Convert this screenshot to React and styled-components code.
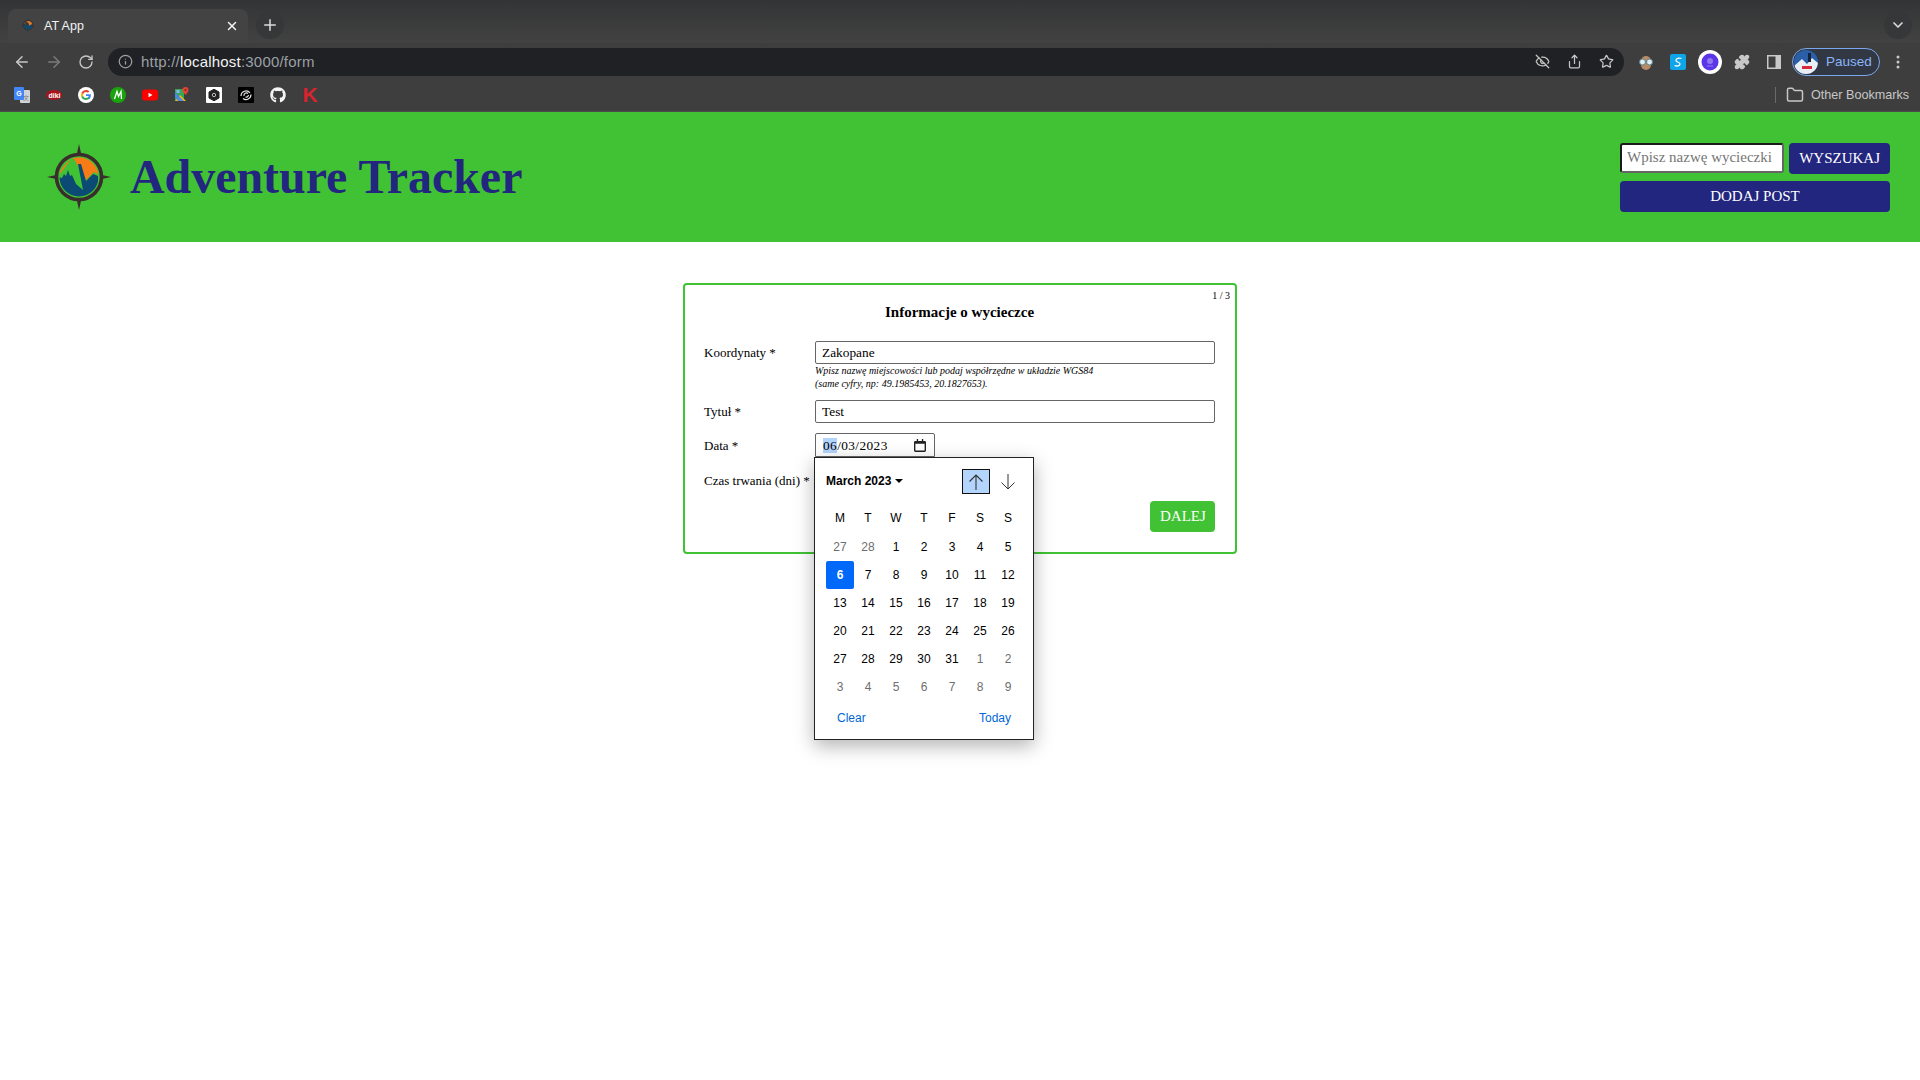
import styled, { createGlobalStyle } from "styled-components";
import { ArrowLeft, ArrowRight, RotateCw, Info, EyeOff, Share, Star, Puzzle, X, Plus, ChevronDown, Folder } from "lucide-react";
import { FaGithub } from "react-icons/fa";

const GREEN = "#40c234";
const NAVY = "#23267f";
const SERIF = '"Liberation Serif", "Times New Roman", serif';
const SANS = '"Liberation Sans", Arial, sans-serif';

const GlobalStyle = createGlobalStyle`
  html, body {
    margin: 0;
    background: #fff;
  }
  * {
    box-sizing: border-box;
  }
`;

const Page = styled.div`
  width: 1920px;
  height: 1080px;
  overflow: hidden;
  display: flex;
  flex-direction: column;
  font-family: ${SERIF};
`;

/* browser chrome */
const TabStrip = styled.div`
  height: 43px;
  flex: none;
  display: flex;
  align-items: flex-end;
  padding: 0 8px;
  background: linear-gradient(#333435, #424242);
`;

const Tab = styled.div`
  position: relative;
  width: 240px;
  height: 34px;
  display: flex;
  align-items: center;
  padding: 0 9px 1px 13px;
  border-radius: 8px 8px 0 0;
  background: #434343;
  color: #f1f3f4;
  font: 12.5px ${SANS};
`;

const TabTitle = styled.span`
  margin-left: 9px;
  flex: 1;
`;

const NewTab = styled.div`
  width: 28px;
  height: 28px;
  margin: 0 0 4px 8px;
  border-radius: 50%;
  background: #363738;
  color: #dcdcdc;
  display: flex;
  align-items: center;
  justify-content: center;
`;

const TabListButton = styled(NewTab)`
  margin: 0 0 4px auto;
`;

const Toolbar = styled.div`
  height: 43px;
  flex: none;
  display: flex;
  align-items: center;
  padding: 0 0 6px 8px;
  background: #3e3e3e;
`;

const NavButton = styled.div`
  width: 28px;
  height: 28px;
  margin-right: 4px;
  display: flex;
  align-items: center;
  justify-content: center;
  color: ${(p) => (p.$dim ? "#7b7b7b" : "#c8c8c8")};
`;

const AddressBar = styled.div`
  width: 1516px;
  height: 28px;
  flex: none;
  display: flex;
  align-items: center;
  margin: 0 6px 0 4px;
  padding: 0 2px 0 10px;
  border-radius: 14px;
  background: #202124;
  color: #9aa0a6;
  font: 15px ${SANS};
`;

const Url = styled.span`
  margin-left: 8px;
  flex: 1;
  letter-spacing: 0.2px;

  b {
    font-weight: 400;
    color: #f1f3f4;
  }
`;

const BarIcon = styled.span`
  width: 32px;
  display: flex;
  justify-content: center;
  color: #c4c7c5;
`;

const ToolIcon = styled.div`
  width: 32px;
  height: 28px;
  flex: none;
  display: flex;
  align-items: center;
  justify-content: center;
  color: #c8c8c8;
`;

const Profile = styled.div`
  width: 88px;
  height: 28px;
  flex: none;
  margin: 0 2px;
  display: flex;
  align-items: center;
  padding: 0 0 0 1px;
  border: 1px solid #7ba7ef;
  border-radius: 14px;
  background: #323843;
  color: #8ab4f8;
  font: 13.5px ${SANS};
`;

const Avatar = styled.div`
  width: 24px;
  height: 24px;
  margin-right: 8px;
  border-radius: 50%;
  overflow: hidden;
  flex: none;
`;

const Bookmarks = styled.div`
  height: 26px;
  flex: none;
  display: flex;
  align-items: center;
  gap: 16px;
  padding: 0 11px 8px 14px;
  background: #3e3e3e;
  border-bottom: 1px solid #4c4c4c;
`;

const Mark = styled.div`
  width: 16px;
  height: 16px;
  flex: none;
  display: flex;
  align-items: center;
  justify-content: center;
  color: #f4f4f4;
`;

const KMark = styled(Mark)`
  color: #d9232e;
  font: bold 21px/16px ${SANS};
`;

const OtherBookmarks = styled.div`
  margin-left: auto;
  height: 16px;
  display: flex;
  align-items: center;
  gap: 7px;
  padding-left: 10px;
  border-left: 1px solid #6a6a6a;
  color: #c7c7c7;
  font: 12.6px ${SANS};
`;

/* app header */
const Header = styled.header`
  height: 130px;
  flex: none;
  display: flex;
  align-items: center;
  justify-content: space-between;
  padding: 0 30px 0 47px;
  background: ${GREEN};
`;

const Brand = styled.div`
  display: flex;
  align-items: center;
  gap: 19px;
`;

const Title = styled.h1`
  margin: 0 0 2px;
  color: ${NAVY};
  font: bold 47.9px ${SERIF};
`;

const Actions = styled.div`
  width: 270px;
  display: flex;
  flex-direction: column;
  gap: 7px;
`;

const SearchRow = styled.div`
  display: flex;
  justify-content: space-between;
`;

const SearchInput = styled.input`
  width: 164px;
  height: 30px;
  padding: 0 5px;
  border: 2px solid;
  border-color: #1b1b1b #666 #666 #1b1b1b;
  border-radius: 3px;
  background: #fff;
  font: 15px ${SERIF};

  &::placeholder {
    color: #757575;
    opacity: 1;
  }
`;

const Button = styled.button`
  height: 31px;
  padding: 0 10px;
  border: 0;
  border-radius: 4px;
  background: ${(p) => (p.$green ? GREEN : NAVY)};
  color: #fff;
  font: 15px ${SERIF};
  width: ${(p) => p.$width || "auto"};
`;

/* form */
const Main = styled.main`
  flex: 1;
  display: flex;
  justify-content: center;
  align-items: flex-start;
  padding-top: 41px;
`;

const Card = styled.form`
  position: relative;
  width: 554px;
  height: 271px;
  padding: 17px 20px 0 19px;
  border: 2px solid ${GREEN};
  border-radius: 4px;
`;

const Step = styled.span`
  position: absolute;
  top: 5px;
  right: 5px;
  font-size: 10px;
`;

const CardTitle = styled.h3`
  margin: 0 0 19px;
  text-align: center;
  font-size: 15px;
  line-height: 20px;
  font-weight: bold;
`;

const Field = styled.div`
  display: grid;
  grid-template-columns: 111px 1fr;
  margin-bottom: ${(p) => p.$gap ?? 10}px;
`;

const Label = styled.label`
  height: ${(p) => (p.$tall ? 25 : 23)}px;
  line-height: ${(p) => (p.$tall ? 25 : 23)}px;
  font-size: 13px;
  white-space: nowrap;
`;

const Control = styled.div`
  position: relative;
`;

const TextInput = styled.input`
  display: block;
  width: ${(p) => p.$width || "100%"};
  height: 23px;
  padding: 0 6px;
  border: 1px solid #666;
  border-radius: 2px;
  background: #fff;
  color: #000;
  font: 13.33px ${SERIF};
`;

const Help = styled.p`
  margin: 0;
  font-size: 10px;
  line-height: 13px;
  font-style: italic;
`;

const DateField = styled.div`
  width: 120px;
  height: 24px;
  display: flex;
  align-items: center;
  justify-content: space-between;
  padding: 1px 8px 0 7px;
  border: 1px solid #666;
  border-radius: 2px 2px 0 0;
  font-size: 13.33px;
  letter-spacing: 0.4px;

  mark {
    background: #b3d4fc;
    color: #000;
  }
`;

const Footer = styled.div`
  display: flex;
  justify-content: flex-end;
  margin-top: 8px;
`;

/* date picker popup */
const Picker = styled.div`
  position: absolute;
  top: 24px;
  left: -1px;
  z-index: 3;
  width: 220px;
  height: 283px;
  padding: 11px 11px 0;
  border: 1px solid #222;
  background: #fff;
  box-shadow: 0 6px 18px rgba(0, 0, 0, 0.3);
  font: 12px ${SANS};
  color: #000;
`;

const PickerTop = styled.div`
  height: 25px;
  display: flex;
  align-items: center;
`;

const Month = styled.div`
  flex: 1;
  display: flex;
  align-items: center;
  gap: 4px;
  margin-top: -1px;
  font-weight: bold;
`;

const Caret = styled.i`
  width: 0;
  height: 0;
  border: 4px solid transparent;
  border-top: 4px solid #000;
  border-bottom: 0;
`;

const StepButton = styled.div`
  width: 28px;
  height: 25px;
  display: flex;
  align-items: center;
  justify-content: center;
  border: 1px solid ${(p) => (p.$active ? "#111" : "transparent")};
  background: ${(p) => (p.$active ? "#b3d4fc" : "transparent")};
  color: #333;
  margin-left: ${(p) => (p.$active ? 0 : 4)}px;
`;

const Grid = styled.div`
  margin-top: 9px;
  display: grid;
  grid-template-columns: repeat(7, 28px);
  grid-template-rows: 30px;
  grid-auto-rows: 28px;
`;

const Cell = styled.div`
  display: flex;
  align-items: center;
  justify-content: center;
  border-radius: 2px;
  background: ${(p) => (p.$selected ? "#0069fa" : "transparent")};
  color: ${(p) => (p.$selected ? "#fff" : p.$muted ? "#6e6e6e" : "#000")};
  font-weight: ${(p) => (p.$selected ? "bold" : "normal")};
`;

const PickerFooter = styled.div`
  display: flex;
  justify-content: space-between;
  padding: 10px 11px 0;
  color: #0067d6;
`;

const Logo = ({ size = 64, bg = GREEN }) => (
  <svg width={size} height={size * 66 / 64} viewBox="-32 -33 64 66">
    <clipPath id={`disc${size}`}>
      <circle r="19.5" />
    </clipPath>
    <path d="M0-33 2-24h-4zM0 33l2-9h-4zM-32 0l9-2v4zM32 0l-9-2v4z" fill="#3a2e2c" />
    <circle r="22.5" fill={bg} stroke="#3a2e2c" strokeWidth="3.6" />
    <g clipPath={`url(#disc${size})`}>
      <path d="M-20-5-9-18-7-22H22V-1L15-5 7 3-5-18-8-18-19-3z" fill="#f77b16" />
      <path d="M-21 0-17 1-15-3-13-1-11-7-9-1-7-2-3 7 4 13-1-13 2-13 7 4 14-3 19-1V22H-21z" fill="#0b4a72" />
    </g>
  </svg>
);

const GoogleG = () => (
  <svg width="16" height="16" viewBox="0 0 16 16">
    <circle cx="8" cy="8" r="8" fill="#fff" />
    <path d="M12.9 8.2c0-.4 0-.7-.1-1H8v1.9h2.8c-.1.6-.5 1.2-1 1.5v1.3h1.6c1-.9 1.5-2.2 1.5-3.7z" fill="#4285f4" />
    <path d="M8 13c1.4 0 2.5-.5 3.4-1.2l-1.6-1.3c-.5.3-1 .5-1.8.5-1.3 0-2.4-.9-2.8-2.1H3.5v1.3C4.3 11.9 6 13 8 13z" fill="#34a853" />
    <path d="M5.2 8.9C5 8.3 5 7.7 5.2 7.1V5.8H3.5c-.7 1.4-.7 3 0 4.4z" fill="#fbbc05" />
    <path d="M8 5c.8 0 1.4.3 1.9.8l1.4-1.4C10.5 3.5 9.3 3 8 3 6 3 4.3 4.1 3.5 5.8l1.7 1.3C5.6 5.9 6.7 5 8 5z" fill="#ea4335" />
  </svg>
);

const BookmarkIcons = () => (
  <>
    <Mark>
      <svg width="16" height="16" viewBox="0 0 16 16">
        <rect x="6" y="3" width="10" height="13" rx="1" fill="#cfd2d6" />
        <rect width="10" height="13" rx="1" fill="#4285f4" />
        <text x="5" y="9" textAnchor="middle" fontSize="7" fontWeight="bold" fontFamily="Liberation Sans" fill="#fff">G</text>
        <text x="12" y="13" textAnchor="middle" fontSize="6" fontFamily="Noto Sans CJK SC" fill="#777">文</text>
      </svg>
    </Mark>
    <Mark>
      <svg width="16" height="16" viewBox="0 0 16 16">
        <ellipse cx="8" cy="8" rx="8" ry="5" fill="#a9141c" />
        <text x="8.5" y="10.5" textAnchor="middle" fontSize="7" fontWeight="bold" fontFamily="Liberation Sans" fill="#fff">diki</text>
      </svg>
    </Mark>
    <Mark><GoogleG /></Mark>
    <Mark>
      <svg width="16" height="16" viewBox="0 0 16 16">
        <circle cx="8" cy="8" r="8" fill="#19a30d" />
        <path d="M4.5 12 7 4.5 8.5 9.5 11 4.5 11.5 12" fill="none" stroke="#fff" strokeWidth="1.3" />
      </svg>
    </Mark>
    <Mark>
      <svg width="16" height="16" viewBox="0 0 16 16">
        <rect y="2.5" width="16" height="11" rx="3" fill="#f00" />
        <path d="M6.5 5.8 10.5 8l-4 2.2z" fill="#fff" />
      </svg>
    </Mark>
    <Mark>
      <svg width="16" height="16" viewBox="0 0 16 16">
        <path d="M1 2h9v12H1z" fill="#34a853" />
        <path d="M1 14 6 8l6 6z" fill="#fbbc05" />
        <path d="M1 5 10 14H4L1 10z" fill="#4285f4" opacity=".9" />
        <rect x="2.5" y="3" width="3" height="3" fill="#8ab4f8" />
        <path d="M11.5 0a3 3 0 0 1 3 3c0 2-3 5-3 5s-3-3-3-5a3 3 0 0 1 3-3z" fill="#e24335" />
        <circle cx="11.5" cy="3" r="1" fill="#8f2018" />
      </svg>
    </Mark>
    <Mark>
      <svg width="16" height="16" viewBox="0 0 16 16">
        <rect width="16" height="16" rx="1" fill="#fff" />
        <path d="M8 2.2 13 5v6l-5 2.8L3 11V5z" fill="#222" stroke="#222" strokeLinejoin="round" />
        <circle cx="8" cy="8" r="1.7" fill="none" stroke="#ddd" strokeWidth=".8" />
      </svg>
    </Mark>
    <Mark>
      <svg width="16" height="16" viewBox="0 0 16 16">
        <rect width="16" height="16" rx="1" fill="#000" />
        <path d="M3 9a5 5 0 0 1 9-3M13 7.5a5 5 0 0 1-8 4M6 9a2.5 2.5 0 0 1 4-2.5M10.5 8a2.5 2.5 0 0 1-3 2" fill="none" stroke="#e8e8e8" strokeWidth="1.2" />
      </svg>
    </Mark>
    <Mark><FaGithub size={16} /></Mark>
    <KMark>K</KMark>
  </>
);

const WEEKDAYS = ["M", "T", "W", "T", "F", "S", "S"];

// 6 rows of March 2023, days outside the month are greyed
const buildDays = () => {
  const days = [27, 28].map((d) => ({ d, muted: true }));
  for (let d = 1; d <= 31; d++) days.push({ d });
  for (let d = 1; d <= 9; d++) days.push({ d, muted: true });
  return days;
};

const ArrowUpThin = () => (
  <svg width="18" height="18" viewBox="0 0 18 18" fill="none" stroke="currentColor">
    <path d="M9 17V2M2.5 8.5 9 2l6.5 6.5" strokeWidth="1.1" />
  </svg>
);

const ArrowDownThin = () => (
  <svg width="18" height="18" viewBox="0 0 18 18" fill="none" stroke="currentColor">
    <path d="M9 1v15M2.5 9.5 9 16l6.5-6.5" strokeWidth="1" />
  </svg>
);

const DatePicker = () => (
  <Picker>
    <PickerTop>
      <Month>March 2023 <Caret /></Month>
      <StepButton $active><ArrowUpThin /></StepButton>
      <StepButton><ArrowDownThin /></StepButton>
    </PickerTop>
    <Grid>
      {WEEKDAYS.map((w, i) => <Cell key={i}>{w}</Cell>)}
      {buildDays().map((day, i) => (
        <Cell key={i} $muted={day.muted} $selected={!day.muted && day.d === 6}>{day.d}</Cell>
      ))}
    </Grid>
    <PickerFooter>
      <span>Clear</span>
      <span>Today</span>
    </PickerFooter>
  </Picker>
);

const CalendarIcon = () => (
  <svg width="12" height="13" viewBox="0 0 13 14">
    <path d="M3 0h1.5v2h4V0H10v2h1.5A1.500 1.500 0 0 1 13 3.500V12.500A1.500 1.500 0 0 1 11.500 14h-10A1.500 1.500 0 0 1 0 12.500V3.500A1.500 1.500 0 0 1 1.500 2H3zM1.500 5v7.500h10V5z" fill="#222" />
  </svg>
);

const App = () => {
  return (
    <Page>
      <GlobalStyle />
      <TabStrip>
        <Tab>
          <Logo size={14} bg="#3b3b3b" />
          <TabTitle>AT App</TabTitle>
          <X size={14} strokeWidth={2.5} />
        </Tab>
        <NewTab><Plus size={18} /></NewTab>
        <TabListButton><ChevronDown size={16} strokeWidth={2.5} /></TabListButton>
      </TabStrip>
      <Toolbar>
        <NavButton><ArrowLeft size={18} /></NavButton>
        <NavButton $dim><ArrowRight size={18} /></NavButton>
        <NavButton><RotateCw size={16} /></NavButton>
        <AddressBar>
          <Info size={15} />
          <Url>http://<b>localhost</b>:3000/form</Url>
          <BarIcon><EyeOff size={15} /></BarIcon>
          <BarIcon><Share size={15} /></BarIcon>
          <BarIcon><Star size={15} /></BarIcon>
        </AddressBar>
        <ToolIcon>
          <svg width="16" height="16" viewBox="0 0 16 16">
            <path d="M3 7a5 5 0 0 1 10 0v4a5 5 0 0 1-10 0z" fill="#b98a68" />
            <circle cx="4.5" cy="8" r="3" fill="#dfeef2" stroke="#5f7f8a" />
            <circle cx="11.5" cy="8" r="3" fill="#dfeef2" stroke="#5f7f8a" />
          </svg>
        </ToolIcon>
        <ToolIcon>
          <svg width="16" height="16" viewBox="0 0 16 16">
            <rect width="16" height="16" rx="2" fill="#0fa5e9" />
            <path d="M11.5 4.5C9 3.5 6 4.5 6 6.5s4 1.5 4 3.5-3 2.5-5.5 1.5" fill="none" stroke="#fff" strokeWidth="1.3" />
          </svg>
        </ToolIcon>
        <ToolIcon>
          <svg width="24" height="24" viewBox="0 0 24 24">
            <circle cx="12" cy="12" r="12" fill="#fff" />
            <circle cx="12" cy="12" r="8.5" fill="#5b35e8" />
            <circle cx="12" cy="11" r="3" fill="#8f78f0" />
            <path d="M9 16h6" stroke="#8f78f0" />
          </svg>
        </ToolIcon>
        <ToolIcon><Puzzle size={16} fill="#c8c8c8" /></ToolIcon>
        <ToolIcon>
          <svg width="14" height="14" viewBox="0 0 14 14">
            <rect width="14" height="14" fill="#c8c8c8" />
            <rect x="1.5" y="1.5" width="7" height="11" fill="#3e3e3e" />
          </svg>
        </ToolIcon>
        <Profile>
          <Avatar>
            <svg width="24" height="24" viewBox="0 0 24 24">
              <rect width="24" height="24" fill="#2a5fa8" />
              <path d="M0 16 8 9l5 5 5-6 6 5v11H0z" fill="#e8eef4" />
              <rect x="8" y="16" width="10" height="3" fill="#d8283c" />
              <rect x="14" y="3" width="3" height="9" fill="#16233c" />
            </svg>
          </Avatar>
          Paused
        </Profile>
        <ToolIcon>
          <svg width="4" height="14" viewBox="0 0 4 14" fill="#c8c8c8">
            <circle cx="2" cy="2" r="1.5" />
            <circle cx="2" cy="7" r="1.5" />
            <circle cx="2" cy="12" r="1.5" />
          </svg>
        </ToolIcon>
      </Toolbar>
      <Bookmarks>
        <BookmarkIcons />
        <OtherBookmarks>
          <Folder size={18} />
          Other Bookmarks
        </OtherBookmarks>
      </Bookmarks>

      <Header>
        <Brand>
          <Logo />
          <Title>Adventure Tracker</Title>
        </Brand>
        <Actions>
          <SearchRow>
            <SearchInput placeholder="Wpisz nazwę wycieczki" />
            <Button type="button">WYSZUKAJ</Button>
          </SearchRow>
          <Button type="button" $width="100%">DODAJ POST</Button>
        </Actions>
      </Header>

      <Main>
        <Card>
          <Step>1 / 3</Step>
          <CardTitle>Informacje o wycieczce</CardTitle>
          <Field>
            <Label>Koordynaty *</Label>
            <Control>
              <TextInput defaultValue="Zakopane" />
              <Help>
                Wpisz nazwę miejscowości lub podaj współrzędne w układzie WGS84
                <br />
                (same cyfry, np: 49.1985453, 20.1827653).
              </Help>
            </Control>
          </Field>
          <Field>
            <Label>Tytuł *</Label>
            <Control>
              <TextInput defaultValue="Test" />
            </Control>
          </Field>
          <Field>
            <Label $tall>Data *</Label>
            <Control>
              <DateField>
                <span><mark>06</mark>/03/2023</span>
                <CalendarIcon />
              </DateField>
              <DatePicker />
            </Control>
          </Field>
          <Field $gap={0}>
            <Label $tall>Czas trwania (dni) *</Label>
            <Control>
              <TextInput $width="119px" />
            </Control>
          </Field>
          <Footer>
            <Button type="button" $green $width="65px">DALEJ</Button>
          </Footer>
        </Card>
      </Main>
    </Page>
  );
};

export default App;
